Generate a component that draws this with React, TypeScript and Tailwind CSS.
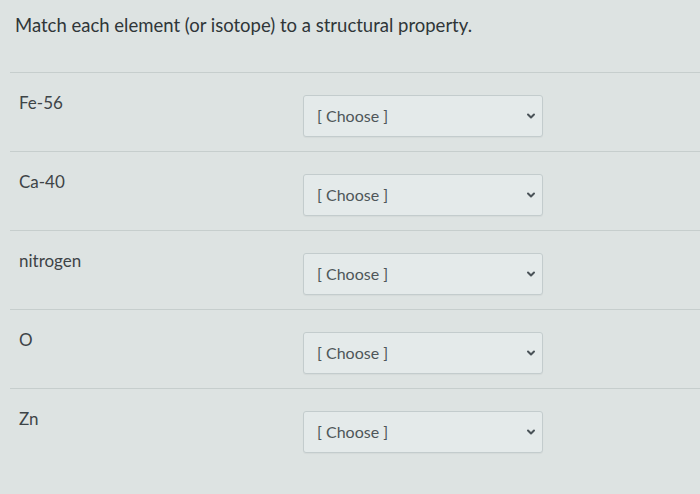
const items = ["Fe-56", "Ca-40", "nitrogen", "O", "Zn"];

function Chevron() {
  return (
    <svg width="12" height="12" viewBox="0 0 12 12" fill="none" className="text-[#4a5358]">
      <path d="M3 4.5 L6 7.5 L9 4.5" stroke="currentColor" strokeWidth="2" strokeLinecap="round" strokeLinejoin="round" />
    </svg>
  );
}

function Select() {
  return (
    <div className="mt-[22px] flex h-[42px] w-[240px] items-center justify-between rounded-[3px] border border-[#c3cccd] bg-[#e4eaea] pl-[13px] pr-[5px] shadow-[0_1px_1px_rgba(0,0,0,0.04)]">
      <span className="text-[16px] text-[#4e5659]">[ Choose ]</span>
      <Chevron />
    </div>
  );
}

export default function App() {
  return (
    <div
      className="min-h-[494px] w-[700px] bg-[#dde3e2] text-[#333a3c]"
      style={{ fontFamily: "Lato, 'Open Sans', sans-serif" }}
    >
      <h1 className="px-[15px] pt-[14px] pb-[35px] text-[18.5px] leading-[23px] text-[#2f3638]">
        Match each element (or isotope) to a structural property.
      </h1>
      <div className="ml-[10px]">
        {items.map((name) => (
          <div key={name} className="flex h-[79px] border-t border-[#c6cecd]">
            <div className="w-[293px] pl-[9px] pt-[19px] text-[17px] leading-[22px] text-[#3d4447]">
              {name}
            </div>
            <Select />
          </div>
        ))}
      </div>
    </div>
  );
}
